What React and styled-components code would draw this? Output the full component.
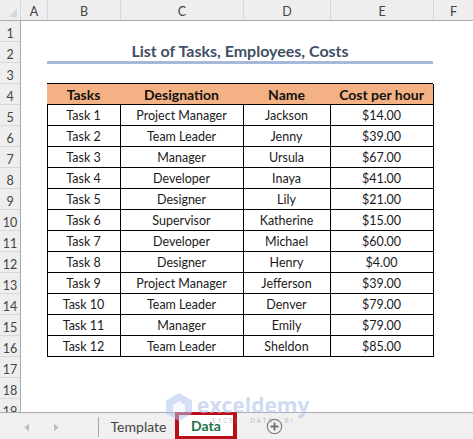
import React from 'react';
import styled, { createGlobalStyle } from 'styled-components';

const GlobalStyle = createGlobalStyle`
  html, body {
    margin: 0;
    padding: 0;
    background: #fff;
  }
  body {
    font-family: Lato, "Open Sans", "Liberation Sans", sans-serif;
  }
`;

const COLS = [
  { label: 'A', width: 27 },
  { label: 'B', width: 73 },
  { label: 'C', width: 123 },
  { label: 'D', width: 87 },
  { label: 'E', width: 103 },
  { label: 'F', width: 40 },
];

const TASKS = [
  ['Task 1', 'Project Manager', 'Jackson', '$14.00'],
  ['Task 2', 'Team Leader', 'Jenny', '$39.00'],
  ['Task 3', 'Manager', 'Ursula', '$67.00'],
  ['Task 4', 'Developer', 'Inaya', '$41.00'],
  ['Task 5', 'Designer', 'Lily', '$21.00'],
  ['Task 6', 'Supervisor', 'Katherine', '$15.00'],
  ['Task 7', 'Developer', 'Michael', '$60.00'],
  ['Task 8', 'Designer', 'Henry', '$4.00'],
  ['Task 9', 'Project Manager', 'Jefferson', '$39.00'],
  ['Task 10', 'Team Leader', 'Denver', '$79.00'],
  ['Task 11', 'Manager', 'Emily', '$79.00'],
  ['Task 12', 'Team Leader', 'Sheldon', '$85.00'],
];

const HEADERS = ['Tasks', 'Designation', 'Name', 'Cost per hour'];
const ROWS = Array.from({ length: 19 }, (_, i) => i + 1);

const Window = styled.div`
  position: relative;
  width: 473px;
  height: 439px;
  overflow: hidden;
  display: flex;
  flex-direction: column;
  background: #fff;
`;

const ColumnBar = styled.div`
  display: flex;
  flex: none;
  height: 20px;
  background: #eeeeee;
  border-bottom: 1px solid #ababab;
`;

const Corner = styled.div`
  flex: none;
  width: 20px;
  position: relative;
  border-right: 1px solid #d8d8d8;
  &::after {
    content: '';
    position: absolute;
    right: 3px;
    bottom: 3px;
    border-style: solid;
    border-width: 0 0 8px 8px;
    border-color: transparent transparent #d6d6d6 transparent;
  }
`;

const ColumnLabel = styled.div`
  flex: none;
  width: ${({ $width }) => $width}px;
  box-sizing: border-box;
  display: flex;
  align-items: center;
  justify-content: center;
  padding-top: 3px;
  font-size: 12.5px;
  color: #444;
  border-right: 1px solid #d8d8d8;
`;

const SheetArea = styled.div`
  display: flex;
  flex: none;
  height: 391px;
  overflow: hidden;
`;

const RowBar = styled.div`
  flex: none;
  width: 20px;
  background: #eeeeee;
  border-right: 1px solid #ababab;
`;

const RowLabel = styled.div`
  box-sizing: border-box;
  height: 21px;
  display: flex;
  align-items: center;
  justify-content: center;
  padding-top: 6px;
  font-size: 12.5px;
  line-height: 14px;
  color: #444;
  border-bottom: 1px solid #d8d8d8;
`;

const Sheet = styled.div`
  flex: 1;
  padding-left: 26px;
`;

const TitleBlock = styled.div`
  width: 386px;
  box-sizing: border-box;
  height: 43px;
  display: flex;
  align-items: flex-end;
  justify-content: center;
  border-bottom: 3px solid #a6b9d9;
`;

const Title = styled.div`
  font-size: 16px;
  font-weight: 700;
  line-height: 20px;
  color: #3f4f66;
`;

const Table = styled.div`
  margin-top: 19px;
  width: 386px;
  box-sizing: border-box;
  display: grid;
  grid-template-columns: 73px 123px 87px 103px;
  grid-auto-rows: 21px;
  border-top: 1px solid #000;
  border-left: 1px solid #000;
`;

const Cell = styled.div`
  box-sizing: border-box;
  display: flex;
  align-items: center;
  justify-content: center;
  border-right: 1px solid #000;
  border-bottom: 1px solid #000;
  font-size: 12.5px;
  color: #1a1a1a;
  white-space: nowrap;
  margin-left: -1px;
`;

const HeaderCell = styled(Cell)`
  background: #f4b183;
  font-size: 14px;
  font-weight: 700;
  color: #111;
`;

const TabBar = styled.div`
  flex: none;
  height: 27px;
  display: flex;
  align-items: stretch;
  background: #f0f0f0;
  border-top: 1px solid #ababab;
`;

const NavArrows = styled.div`
  flex: none;
  width: 99px;
  display: flex;
  align-items: center;
  gap: 23px;
  padding-left: 24px;
  box-sizing: border-box;
  border-right: 1px solid #a8a8a8;
  margin: 4px 0 3px;
`;

const SheetTab = styled.div`
  flex: none;
  box-sizing: border-box;
  display: flex;
  align-items: center;
  justify-content: center;
  width: ${({ $width }) => $width}px;
  padding-left: 3px;
  padding-bottom: 1px;
  font-size: 14px;
  color: #444;
`;

const ActiveTab = styled(SheetTab)`
  background: #fff;
  padding-left: 0;
  font-weight: 700;
  color: #217346;
  border: solid #bb0f17;
  border-width: 3px 4px 4px 4px;
  margin-top: -1px;
  height: 28px;
`;

const AddTab = styled.div`
  flex: none;
  display: flex;
  align-items: center;
  margin-left: 29px;
`;

const Watermark = styled.div`
  position: absolute;
  left: 165px;
  top: 392px;
  display: flex;
  align-items: flex-start;
  gap: 4px;
  pointer-events: none;
`;

const WatermarkText = styled.div`
  display: flex;
  flex-direction: column;
  align-items: center;
  margin-top: 1px;
`;

const WatermarkName = styled.span`
  font-family: "Open Sans", sans-serif;
  font-size: 21px;
  font-weight: 700;
  line-height: 24px;
  color: rgba(176, 194, 235, 0.62);
`;

const WatermarkTag = styled.span`
  font-family: "Open Sans", sans-serif;
  font-size: 6.5px;
  letter-spacing: 1.8px;
  line-height: 8px;
  color: rgba(150, 150, 150, 0.6);
`;

const Arrow = ({ flip }) => (
  <svg width="6" height="9" viewBox="0 0 6 9">
    <path d={flip ? 'M5 0.5 L0.5 4.5 L5 8.5 Z' : 'M1 0.5 L5.5 4.5 L1 8.5 Z'} fill="#bdbdbd" />
  </svg>
);

const PlusCircle = () => (
  <svg width="17" height="17" viewBox="0 0 17 17">
    <circle cx="8.5" cy="8.5" r="7.2" fill="none" stroke="#808080" strokeWidth="1.2" />
    <path d="M8.5 4.5 V12.5 M4.5 8.5 H12.5" stroke="#707070" strokeWidth="1.8" />
  </svg>
);

const WatermarkLogo = () => (
  <svg width="28" height="30" viewBox="0 0 28 30">
    <path d="M14 1 L27 8.5 V21.5 L14 29 L1 21.5 V8.5 Z" fill="rgba(176,194,235,0.55)" />
    <path d="M14 9 L20 13 V20 H8 V13 Z" fill="rgba(255,255,255,0.8)" />
  </svg>
);

const App = () => (
  <Window>
    <GlobalStyle />
    <ColumnBar>
      <Corner />
      {COLS.map((col) => (
        <ColumnLabel key={col.label} $width={col.width}>
          {col.label}
        </ColumnLabel>
      ))}
    </ColumnBar>
    <SheetArea>
      <RowBar>
        {ROWS.map((n) => (
          <RowLabel key={n}>{n}</RowLabel>
        ))}
      </RowBar>
      <Sheet>
        <TitleBlock>
          <Title>List of Tasks, Employees, Costs</Title>
        </TitleBlock>
        <Table>
          {HEADERS.map((h) => (
            <HeaderCell key={h}>{h}</HeaderCell>
          ))}
          {TASKS.map((row) =>
            row.map((value, i) => <Cell key={row[0] + i}>{value}</Cell>)
          )}
        </Table>
      </Sheet>
    </SheetArea>
    <TabBar>
      <NavArrows>
        <Arrow flip />
        <Arrow />
      </NavArrows>
      <SheetTab $width={76}>Template</SheetTab>
      <ActiveTab $width={62}>Data</ActiveTab>
      <AddTab>
        <PlusCircle />
      </AddTab>
    </TabBar>
    <Watermark>
      <WatermarkLogo />
      <WatermarkText>
        <WatermarkName>exceldemy</WatermarkName>
        <WatermarkTag>EXCEL · DATA · BI</WatermarkTag>
      </WatermarkText>
    </Watermark>
  </Window>
);

export default App;
